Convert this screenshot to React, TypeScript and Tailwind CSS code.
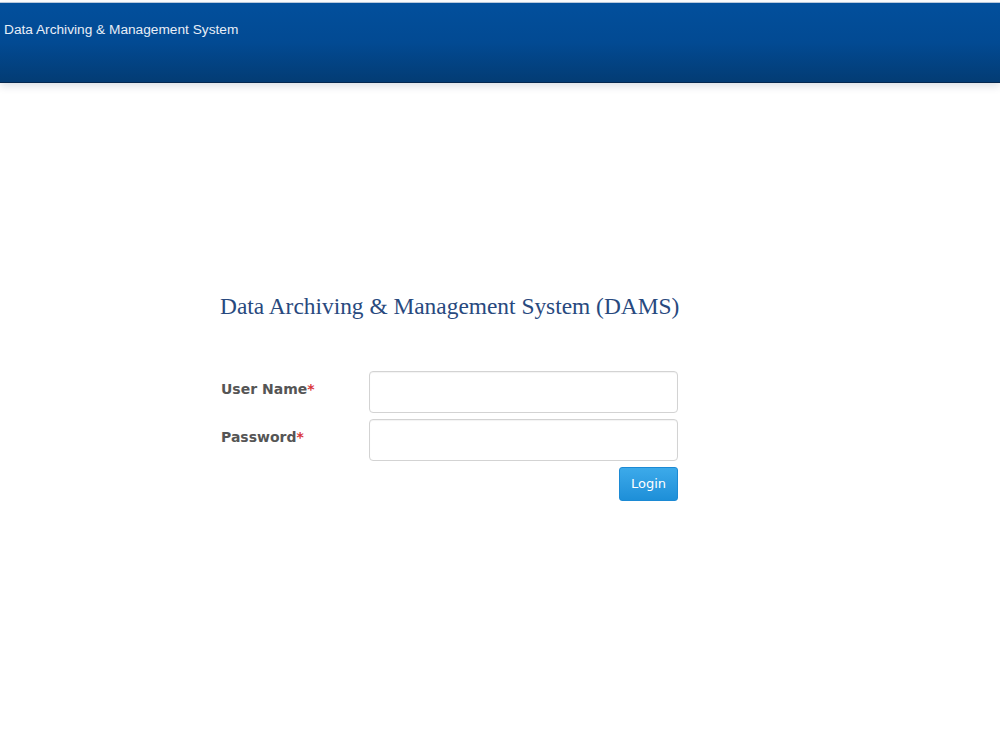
export default function App() {
  return (
    <div className="min-h-[750px] bg-white" style={{ fontFamily: '"Liberation Sans", Arial, sans-serif' }}>
      <div className="pt-[2px]">
        <header className="h-[81px] border-t border-t-[#b8c8dc] border-b border-b-[#06284f] bg-gradient-to-b from-[#024f9c] via-[#024a93] to-[#033c74] shadow-[0_3px_8px_rgba(0,40,80,0.15)]">
          <div className="pl-[4px] pt-[17px] text-[13.7px] text-[#e8eef7]">Data Archiving &amp; Management System</div>
        </header>
      </div>

      <main className="pl-[220px] pt-[209px]">
        <div className="w-[458px]">
          <h1
            className="whitespace-nowrap text-[23.4px] leading-[28px] text-[#28497e]"
            style={{ fontFamily: '"Liberation Serif", "Times New Roman", serif' }}
          >
            Data Archiving &amp; Management System (DAMS)
          </h1>

          <form className="mt-[51px] flex flex-col" onSubmit={(e) => e.preventDefault()}>
            <div className="flex items-start">
              <label className="w-[149px] pt-[8px] pl-[1px] text-[14px] font-bold text-[#555]" style={{ fontFamily: '"DejaVu Sans", Verdana, sans-serif' }}>
                User Name<span className="text-[#d9353a]">*</span>
              </label>
              <input className="h-[42px] flex-1 rounded-[4px] border border-[#d3d3d3] bg-white px-3 text-[14px] shadow-[inset_0_1px_1px_rgba(0,0,0,0.05)] outline-none" />
            </div>
            <div className="mt-[6px] flex items-start">
              <label className="w-[149px] pt-[8px] pl-[1px] text-[14px] font-bold text-[#555]" style={{ fontFamily: '"DejaVu Sans", Verdana, sans-serif' }}>
                Password<span className="text-[#d9353a]">*</span>
              </label>
              <input type="password" className="h-[42px] flex-1 rounded-[4px] border border-[#d3d3d3] bg-white px-3 text-[14px] shadow-[inset_0_1px_1px_rgba(0,0,0,0.05)] outline-none" />
            </div>
            <div className="mt-[6px] flex justify-end">
              <button className="h-[34px] w-[59px] rounded-[3px] border border-[#1c8ad4] bg-gradient-to-b from-[#3caaea] to-[#1d8fd8] text-[13px] text-white" style={{ fontFamily: '"DejaVu Sans", Verdana, sans-serif' }}>
                Login
              </button>
            </div>
          </form>
        </div>
      </main>
    </div>
  );
}
